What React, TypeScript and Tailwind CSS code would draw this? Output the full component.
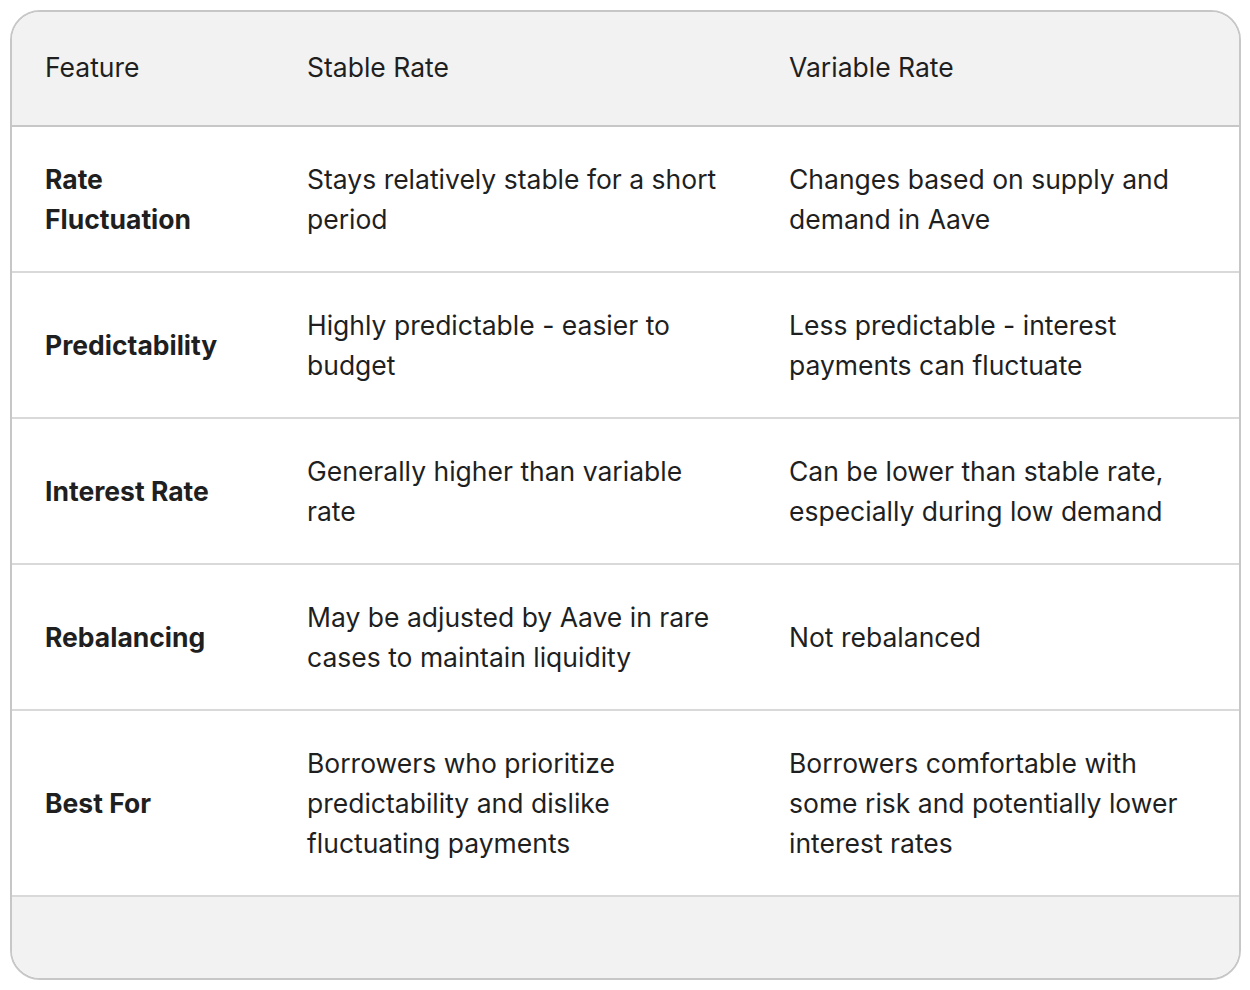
import React from "react";

interface Row {
    feature: string;
    stable: string;
    variable: string;
}

const rows: Row[] = [
    {
        feature: "Rate Fluctuation",
        stable: "Stays relatively stable for a short period",
        variable: "Changes based on supply and demand in Aave",
    },
    {
        feature: "Predictability",
        stable: "Highly predictable - easier to budget",
        variable: "Less predictable - interest payments can fluctuate",
    },
    {
        feature: "Interest Rate",
        stable: "Generally higher than variable rate",
        variable: "Can be lower than stable rate, especially during low demand",
    },
    {
        feature: "Rebalancing",
        stable: "May be adjusted by Aave in rare cases to maintain liquidity",
        variable: "Not rebalanced",
    },
    {
        feature: "Best For",
        stable: "Borrowers who prioritize predictability and dislike fluctuating payments",
        variable: "Borrowers comfortable with some risk and potentially lower interest rates",
    },
];

export default function App() {
    return (
        <div className="w-[1250px] h-[990px] bg-white p-[10px] pr-[9px] font-['Inter',sans-serif] text-[26.5px] leading-[40px] text-[#1f1f1f]">
            <div className="overflow-hidden rounded-[30px] border-2 border-[#c7c7c7]">
                <div className="grid grid-cols-[261px_482px_1fr] bg-[#f2f2f2] border-b-2 border-[#c7c7c7]">
                    <div className="pl-[33px] pr-[34px] pt-[35px] pb-[38px]">Feature</div>
                    <div className="px-[34px] pt-[35px] pb-[38px]">Stable Rate</div>
                    <div className="px-[34px] pt-[35px] pb-[38px]">Variable Rate</div>
                </div>
                {rows.map((row) => (
                    <div
                        key={row.feature}
                        className="grid grid-cols-[261px_482px_1fr] items-center border-b-2 border-[#d9d9d9] last:border-[#c7c7c7]"
                    >
                        <div className="pl-[33px] pr-[34px] py-[32px] font-bold">{row.feature}</div>
                        <div className="pl-[34px] pr-[30px] py-[32px]">{row.stable}</div>
                        <div className="pl-[34px] pr-[30px] py-[32px]">{row.variable}</div>
                    </div>
                ))}
                <div className="h-[81px] bg-[#f2f2f2]"></div>
            </div>
        </div>
    );
}
